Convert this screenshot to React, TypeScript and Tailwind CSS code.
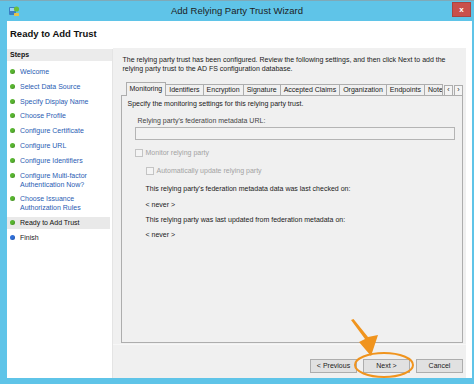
import React from 'react';

type Step = { lines: string[]; state: 'done' | 'current' | 'next' };

const steps: Step[] = [
  { lines: ['Welcome'], state: 'done' },
  { lines: ['Select Data Source'], state: 'done' },
  { lines: ['Specify Display Name'], state: 'done' },
  { lines: ['Choose Profile'], state: 'done' },
  { lines: ['Configure Certificate'], state: 'done' },
  { lines: ['Configure URL'], state: 'done' },
  { lines: ['Configure Identifiers'], state: 'done' },
  { lines: ['Configure Multi-factor', 'Authentication Now?'], state: 'done' },
  { lines: ['Choose Issuance', 'Authorization Rules'], state: 'done' },
  { lines: ['Ready to Add Trust'], state: 'current' },
  { lines: ['Finish'], state: 'next' },
];

const tabs = ['Monitoring', 'Identifiers', 'Encryption', 'Signature', 'Accepted Claims', 'Organization', 'Endpoints', 'Note'];

function WizardIcon() {
  return (
    <svg width="12" height="12" viewBox="0 0 12 12">
      <rect x="1" y="2" width="7" height="8" rx="1" fill="#3a7fc4" />
      <rect x="2" y="3" width="5" height="3" fill="#9fd3f5" />
      <circle cx="8.5" cy="4" r="2.6" fill="#6cbf3a" />
      <rect x="6" y="8" width="5" height="3" rx="0.5" fill="#e7c24a" />
    </svg>
  );
}

function Bullet({ state }: { state: Step['state'] }) {
  const color = state === 'next' ? 'bg-[#2f6fd8]' : 'bg-[#58b530]';
  return <span className={`w-[5px] h-[5px] rounded-full ${color} shrink-0 shadow-[inset_-1px_-1px_0_rgba(0,0,0,0.15)]`} />;
}

function StepItem({ step }: { step: Step }) {
  const text =
    step.state === 'done' ? 'text-[#2a5cb3]' : step.state === 'current' ? 'text-[#111] bg-[#e9e9e9]' : 'text-[#222]';
  return (
    <div className={`flex gap-[5px] pl-[3px] ${step.state === 'current' ? 'bg-[#e9e9e9] py-[1.5px] -my-[1.5px]' : ''}`}>
      <div className="h-[9px] flex items-center">
        <Bullet state={step.state} />
      </div>
      <div className={`flex flex-col leading-[9px] ${text}`}>
        {step.lines.map((l) => (
          <span key={l}>{l}</span>
        ))}
      </div>
    </div>
  );
}

function Checkbox({ label }: { label: string }) {
  return (
    <div className="flex items-center gap-[3px] text-[#a3a3a3]">
      <span className="w-[8px] h-[8px] border border-[#c4c4c4] bg-[#f4f4f4]" />
      <span>{label}</span>
    </div>
  );
}

function Button({ label }: { label: string }) {
  return (
    <div className="w-[47px] h-[14px] border border-[#adadad] bg-[#e1e1e1] flex items-center justify-center text-[#222]">
      {label}
    </div>
  );
}

export default function App() {
  return (
    <div className="relative w-[474px] h-[384px] bg-[#5fc4e8] flex flex-col font-['Liberation_Sans',Arial,sans-serif] text-[7px] text-[#1a1a1a] overflow-hidden">
      {/* title bar */}
      <div className="h-[21px] flex items-center relative border-t border-[#7fa9b8]">
        <div className="absolute left-[8px] top-[4px]">
          <WizardIcon />
        </div>
        <div className="flex-1 text-center text-[9.5px] text-[#1d1d1d]">Add Relying Party Trust Wizard</div>
        <div className="absolute right-[3px] top-[1px] w-[19px] h-[15px] bg-[#c9504b] border border-[#a84542] flex items-center justify-center text-white text-[8px] font-bold">
          x
        </div>
      </div>

      <div className="flex-1 ml-[7px] mr-[2px] mb-[6px] bg-white flex flex-col">
        <div className="h-[27px] flex items-center pl-[3px] text-[9.5px] font-bold text-[#111]">Ready to Add Trust</div>

        <div className="flex flex-1 pt-[1px]">
          {/* steps */}
          <div className="w-[108px] flex flex-col border-r border-[#e4e4e4]">
            <div className="h-[12px] bg-[#ebebeb] flex items-center pl-[3px] font-bold text-[#111]">Steps</div>
            <div className="flex flex-col gap-[5.8px] pt-[6px] pr-[2px]">
              {steps.map((s) => (
                <StepItem key={s.lines[0]} step={s} />
              ))}
            </div>
          </div>

          {/* content */}
          <div className="flex-1 flex flex-col bg-[#f0f0f0] mr-[6px] -mt-[1px]">
            <div className="pl-[10px] pt-[7px] leading-[9px]">
              <div>The relying party trust has been configured. Review the following settings, and then click Next to add the</div>
              <div>relying party trust to the AD FS configuration database.</div>
            </div>

            <div className="ml-[8px] mr-[3px] mt-[9px] flex flex-col">
              <div className="flex items-end h-[14px] pl-[5px] -mb-px relative">
                {tabs.map((t, i) => (
                  <div
                    key={t}
                    className={
                      i === 0
                        ? 'h-[14px] px-[3px] flex items-center border border-b-0 border-[#adadad] bg-[#f0f0f0]'
                        : `h-[12px] px-[3px] flex items-center border border-l-0 border-[#adadad] bg-[#f0f0f0] whitespace-nowrap ${
                            t === 'Note' ? 'w-[18px] overflow-hidden' : ''
                          }`
                    }
                  >
                    {t}
                  </div>
                ))}
                <div className="flex h-[12px] items-center gap-px ml-px">
                  <span className="w-[9px] h-[11px] border border-[#adadad] bg-[#f4f4f4] flex items-center justify-center text-[7px]">‹</span>
                  <span className="w-[9px] h-[11px] border border-[#adadad] bg-[#f4f4f4] flex items-center justify-center text-[7px]">›</span>
                </div>
              </div>
              <div className="h-[248px] border border-[#adadad] bg-[#f0f0f0] flex flex-col leading-[9px]">
                <div className="pl-[6px] pt-[3px]">Specify the monitoring settings for this relying party trust.</div>
                <div className="pl-[16px] mt-[8px] text-[#444]">Relying party's federation metadata URL:</div>
                <div className="ml-[13px] mr-[7px] mt-[2px] h-[13px] border border-[#b4b4b4] bg-[#f2f2f2]" />
                <div className="ml-[13px] mt-[8px]">
                  <Checkbox label="Monitor relying party" />
                </div>
                <div className="ml-[24px] mt-[9px]">
                  <Checkbox label="Automatically update relying party" />
                </div>
                <div className="pl-[24px] mt-[9px]">This relying party's federation metadata data was last checked on:</div>
                <div className="pl-[24px] mt-[7px]">&lt; never &gt;</div>
                <div className="pl-[24px] mt-[6px]">This relying party was last updated from federation metadata on:</div>
                <div className="pl-[24px] mt-[6px]">&lt; never &gt;</div>
              </div>
            </div>

            <div className="flex-1 flex items-start justify-end gap-[6px] pt-[14px] pr-[3px] mt-[1px] border-t border-[#f7f7f7]">
              <Button label="< Previous" />
              <Button label="Next >" />
              <Button label="Cancel" />
            </div>
          </div>
        </div>
      </div>

      {/* annotation */}
      <svg className="absolute left-0 top-0 pointer-events-none" width="474" height="384" viewBox="0 0 474 384">
        <ellipse cx="384" cy="365" rx="29" ry="12" fill="none" stroke="#f0941e" strokeWidth="2" />
        <polygon points="351,320 353.5,319 368,337 378,335 371,356 359,342 365,339" fill="#f0941e" />
      </svg>
    </div>
  );
}
